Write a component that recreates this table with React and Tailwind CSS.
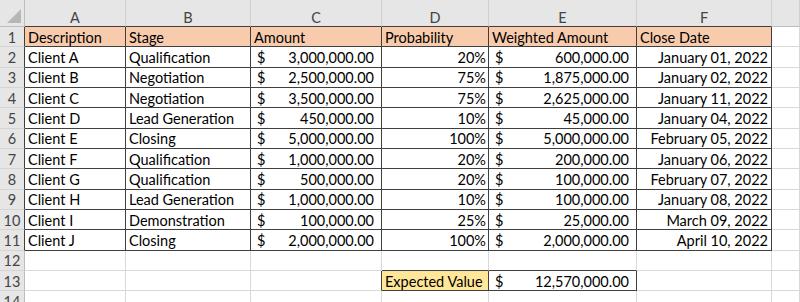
import React from 'react';

const cols = ['A', 'B', 'C', 'D', 'E', 'F', ''];

const deals = [
  ['Client A', 'Qualification', '3,000,000.00', '20%', '600,000.00', 'January 01, 2022'],
  ['Client B', 'Negotiation', '2,500,000.00', '75%', '1,875,000.00', 'January 02, 2022'],
  ['Client C', 'Negotiation', '3,500,000.00', '75%', '2,625,000.00', 'January 11, 2022'],
  ['Client D', 'Lead Generation', '450,000.00', '10%', '45,000.00', 'January 04, 2022'],
  ['Client E', 'Closing', '5,000,000.00', '100%', '5,000,000.00', 'February 05, 2022'],
  ['Client F', 'Qualification', '1,000,000.00', '20%', '200,000.00', 'January 06, 2022'],
  ['Client G', 'Qualification', '500,000.00', '20%', '100,000.00', 'February 07, 2022'],
  ['Client H', 'Lead Generation', '1,000,000.00', '10%', '100,000.00', 'January 08, 2022'],
  ['Client I', 'Demonstration', '100,000.00', '25%', '25,000.00', 'March 09, 2022'],
  ['Client J', 'Closing', '2,000,000.00', '100%', '2,000,000.00', 'April 10, 2022'],
];

const grid = 'border-r border-b border-[#d9d9d9]';
const dark = 'border-r border-b border-[#3f3f3f]';

function Cell({ className = '', children }) {
  return (
    <div className={`flex items-end pb-[1px] overflow-hidden whitespace-nowrap ${className}`}>
      {children}
    </div>
  );
}

function RowHead({ n, edge }) {
  return (
    <Cell className={`justify-center bg-[#e6e6e6] text-[#444] border-b border-[#d4d4d4] border-r ${edge ? 'border-r-[#3f3f3f]' : 'border-r-[#bdbdbd]'}`}>
      {n}
    </Cell>
  );
}

function Money({ value, className = '' }) {
  return (
    <Cell className={`justify-between pl-[6px] pr-[7px] ${className}`}>
      <span>$</span>
      <span>{value}</span>
    </Cell>
  );
}

export default function App() {
  return (
    <div
      className="w-[800px] h-[302px] overflow-hidden bg-white text-[14.5px] text-black leading-none"
      style={{ fontFamily: 'Lato, "Liberation Sans", sans-serif' }}
    >
      <div className="grid grid-cols-[25px_101px_125px_131px_107px_148px_135px_1fr] grid-rows-[27px_repeat(13,20.33px)_20px]">
        {/* corner */}
        <div className="relative bg-[#e6e6e6] border-r border-b border-[#bdbdbd]">
          <div className="absolute right-[3px] bottom-[3px] w-0 h-0 border-l-[14px] border-l-transparent border-b-[14px] border-b-[#b7b7b7]" />
        </div>
        {cols.map((c, i) => (
          <Cell
            key={i}
            className={`justify-center items-center pb-0 bg-[#e6e6e6] text-[#444] border-r border-r-[#d0d0d0] border-b ${i < 6 ? 'border-b-[#3f3f3f]' : 'border-b-[#bdbdbd]'}`}
          >
            {c}
          </Cell>
        ))}

        {/* row 1 headers */}
        <RowHead n={1} edge />
        {['Description', 'Stage', 'Amount', 'Probability', 'Weighted Amount', 'Close Date'].map((h) => (
          <Cell key={h} className={`bg-[#f8cbad] pl-[3px] ${dark}`}>
            {h}
          </Cell>
        ))}
        <Cell className={grid} />

        {deals.map((d, i) => (
          <React.Fragment key={d[0]}>
            <RowHead n={i + 2} edge />
            <Cell className={`pl-[3px] ${dark}`}>{d[0]}</Cell>
            <Cell className={`pl-[3px] ${dark}`}>{d[1]}</Cell>
            <Money value={d[2]} className={dark} />
            <Cell className={`justify-end pr-[2px] ${dark}`}>{d[3]}</Cell>
            <Money value={d[4]} className={dark} />
            <Cell className={`justify-end pr-[3px] ${dark}`}>{d[5]}</Cell>
            <Cell className={grid} />
          </React.Fragment>
        ))}

        {/* row 12 */}
        <RowHead n={12} />
        <Cell className={grid} />
        <Cell className={grid} />
        <Cell className={grid} />
        <Cell className="border-r border-r-[#d9d9d9] border-b border-b-[#3f3f3f]" />
        <Cell className="border-r border-r-[#d9d9d9] border-b border-b-[#3f3f3f]" />
        <Cell className={grid} />
        <Cell className={grid} />

        {/* row 13 */}
        <RowHead n={13} />
        <Cell className={grid} />
        <Cell className={grid} />
        <Cell className="border-r border-r-[#3f3f3f] border-b border-b-[#d9d9d9]" />
        <Cell className={`bg-[#ffe699] pl-[3px] ${dark}`}>Expected Value</Cell>
        <Money value="12,570,000.00" className={dark} />
        <Cell className={grid} />
        <Cell className={grid} />

        {/* row 14, mostly below the window edge */}
        <RowHead n={14} />
        {cols.map((c, i) => (
          <Cell key={i} className={grid} />
        ))}
      </div>
    </div>
  );
}
